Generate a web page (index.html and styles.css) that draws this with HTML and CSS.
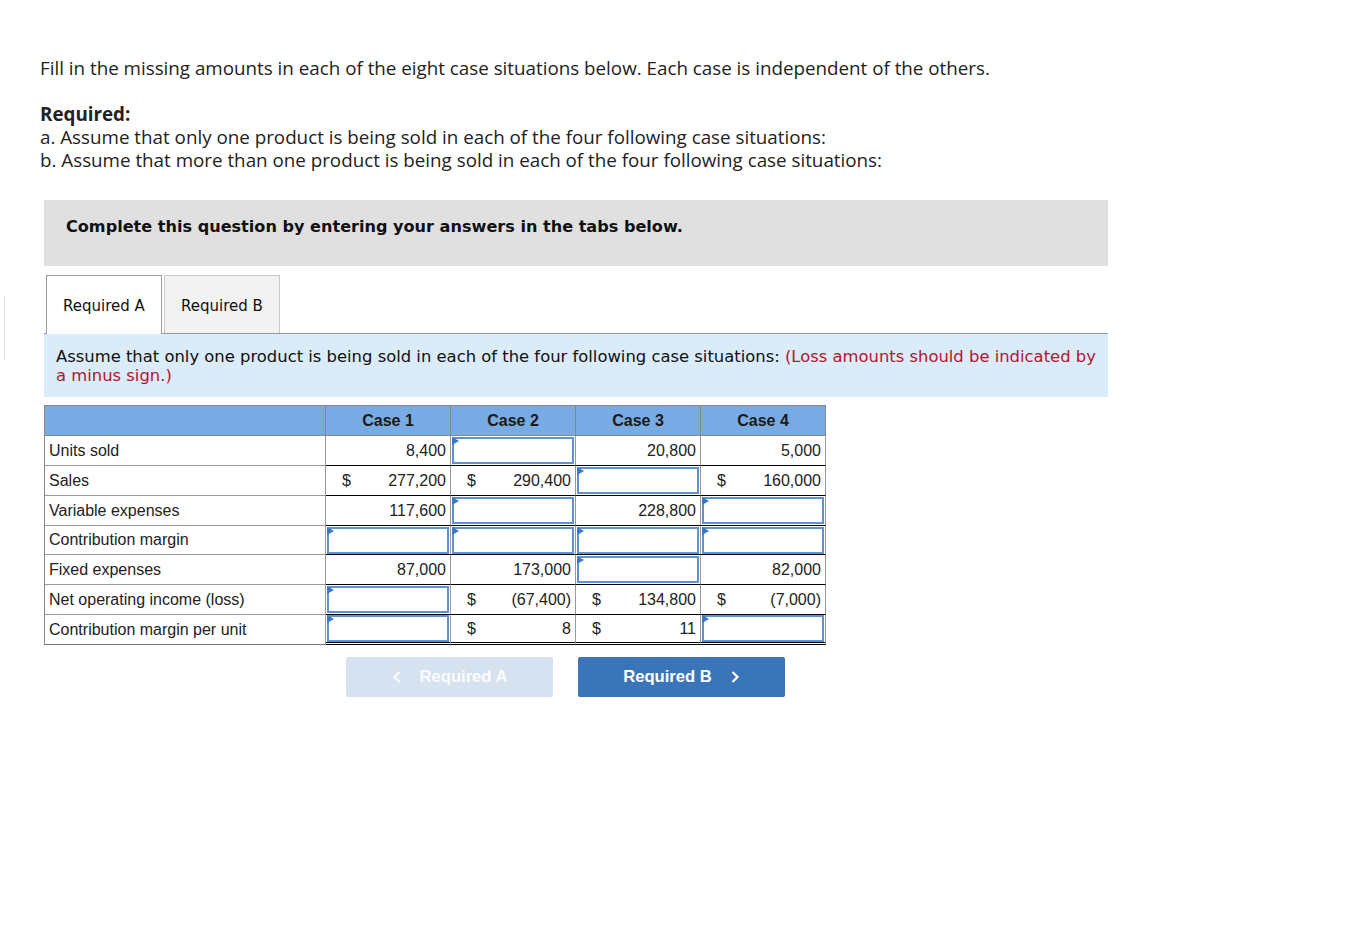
FILE: index.html
```html
<!DOCTYPE html>
<html>
<head>
<meta charset="utf-8">
<link rel="stylesheet" href="styles.css">
</head>
<body>
<div class="edge-mark"></div>
<div class="page">
  <p class="intro">Fill in the missing amounts in each of the eight case situations below. Each case is independent of the others.</p>
  <div class="required">
    <div class="req-title">Required:</div>
    <div>a. Assume that only one product is being sold in each of the four following case situations:</div>
    <div>b. Assume that more than one product is being sold in each of the four following case situations:</div>
  </div>
  <div class="work">
    <div class="banner">Complete this question by entering your answers in the tabs below.</div>
    <div class="tabs">
      <div class="tab active">Required A</div>
      <div class="tab">Required B</div>
    </div>
    <div class="info">Assume that only one product is being sold in each of the four following case situations: <span class="red">(Loss amounts should be indicated by a minus sign.)</span></div>
    <table class="grid">
      <thead>
        <tr>
          <th class="lbl"></th>
          <th>Case 1</th>
          <th>Case 2</th>
          <th>Case 3</th>
          <th>Case 4</th>
        </tr>
      </thead>
      <tbody>
        <tr>
          <td class="lbl">Units sold</td>
          <td class="val"><span class="num">8,400</span></td>
          <td class="val inp"><div class="box"></div></td>
          <td class="val"><span class="num">20,800</span></td>
          <td class="val"><span class="num">5,000</span></td>
        </tr>
        <tr>
          <td class="lbl">Sales</td>
          <td class="val"><span class="cur">$</span><span class="num">277,200</span></td>
          <td class="val"><span class="cur">$</span><span class="num">290,400</span></td>
          <td class="val inp"><div class="box"></div></td>
          <td class="val"><span class="cur">$</span><span class="num">160,000</span></td>
        </tr>
        <tr>
          <td class="lbl">Variable expenses</td>
          <td class="val"><span class="num">117,600</span></td>
          <td class="val inp"><div class="box"></div></td>
          <td class="val"><span class="num">228,800</span></td>
          <td class="val inp"><div class="box"></div></td>
        </tr>
        <tr class="short">
          <td class="lbl">Contribution margin</td>
          <td class="val inp"><div class="box"></div></td>
          <td class="val inp"><div class="box"></div></td>
          <td class="val inp"><div class="box"></div></td>
          <td class="val inp"><div class="box"></div></td>
        </tr>
        <tr>
          <td class="lbl">Fixed expenses</td>
          <td class="val"><span class="num">87,000</span></td>
          <td class="val"><span class="num">173,000</span></td>
          <td class="val inp"><div class="box"></div></td>
          <td class="val"><span class="num">82,000</span></td>
        </tr>
        <tr>
          <td class="lbl">Net operating income (loss)</td>
          <td class="val inp"><div class="box"></div></td>
          <td class="val"><span class="cur">$</span><span class="num">(67,400)</span></td>
          <td class="val"><span class="cur">$</span><span class="num">134,800</span></td>
          <td class="val"><span class="cur">$</span><span class="num">(7,000)</span></td>
        </tr>
        <tr class="last">
          <td class="lbl">Contribution margin per unit</td>
          <td class="val inp"><div class="box"></div></td>
          <td class="val"><span class="cur">$</span><span class="num">8</span></td>
          <td class="val"><span class="cur">$</span><span class="num">11</span></td>
          <td class="val inp"><div class="box"></div></td>
        </tr>
      </tbody>
    </table>
    <div class="nav">
      <button class="btn prev"><svg width="10" height="14" viewBox="0 0 10 14"><path d="M7.5 2 L2.5 7 L7.5 12" fill="none" stroke="currentColor" stroke-width="2.2"/></svg><span>Required A</span></button>
      <button class="btn next"><span>Required B</span><svg width="10" height="14" viewBox="0 0 10 14"><path d="M2.5 2 L7.5 7 L2.5 12" fill="none" stroke="currentColor" stroke-width="2.2"/></svg></button>
    </div>
  </div>
</div>
</body>
</html>
```

FILE: styles.css
```css
html, body {
  margin: 0;
  padding: 0;
  background: #fff;
}

body {
  font-family: "Open Sans", "Liberation Sans", sans-serif;
  color: #222;
}

.edge-mark {
  position: absolute;
  left: 4px;
  top: 296px;
  width: 1px;
  height: 64px;
  background: #e2e2e2;
}

.page {
  padding: 57px 0 0 40px;
}

.intro {
  margin: 0;
  font-size: 18.8px;
  line-height: 23px;
}

.required {
  margin-top: 23px;
  font-size: 18.8px;
  line-height: 23px;
}

.req-title {
  font-weight: 700;
}

.work {
  margin-left: 4px;
  width: 1064px;
  margin-top: 28px;
}

.banner {
  background: #e0e0e0;
  height: 66px;
  box-sizing: border-box;
  padding: 17px 0 0 22px;
  font-family: "DejaVu Sans", Verdana, sans-serif;
  font-weight: 700;
  font-size: 16.1px;
  line-height: 20px;
  color: #111;
}

.tabs {
  display: flex;
  gap: 2px;
  margin-top: 9px;
  padding-left: 2px;
  border-bottom: 1px solid #999;
  height: 58px;
}

.tab {
  width: 116px;
  box-sizing: border-box;
  border: 1px solid #c8c8c8;
  border-bottom: none;
  background: #f2f2f2;
  font-family: "DejaVu Sans", Verdana, sans-serif;
  font-size: 15px;
  color: #111;
  display: flex;
  align-items: center;
  justify-content: center;
  height: 58px;
  padding-top: 2px;
}

.tab.active {
  background: #fff;
  border-color: #999;
  height: 59px;
  margin-bottom: -1px;
}

.info {
  background: #daebf9;
  height: 63px;
  box-sizing: border-box;
  padding: 13px 12px 0 12px;
  font-family: "DejaVu Sans", Verdana, sans-serif;
  font-size: 16.4px;
  line-height: 19px;
  color: #111;
}

.red {
  color: #b3162f;
}

.grid {
  margin-top: 8px;
  border-collapse: separate;
  border-spacing: 0;
  border-left: 1px solid #888;
  border-top: 1px solid #888;
  font-family: "Liberation Sans", Arial, sans-serif;
  font-size: 16px;
  color: #222;
}

.grid th {
  box-sizing: border-box;
  background: #78abe3;
  height: 30px;
  font-weight: 700;
  border-right: 1px solid #888;
  border-bottom: 1px solid #888;
  padding: 0;
  width: 125px;
  color: #1a1a1a;
  line-height: 18px;
}

.grid th.lbl {
  width: 281px;
}

.grid td {
  box-sizing: border-box;
  height: 30px;
  padding: 0;
  border-right: 1px solid #999;
  line-height: 18px;
}

.grid td.lbl {
  border-bottom: 1px solid #999;
  padding-left: 4px;
  width: 281px;
}

.grid td.val {
  border-bottom: 1px solid #000;
  position: relative;
  text-align: right;
  padding-right: 4px;
  width: 125px;
}

.grid tr.short td {
  height: 29px;
}

.grid tr.last td.val {
  border-bottom: 3px double #000;
}

.grid tr.last td {
  height: 30px;
}

.grid tr.last td.lbl {
  border-bottom: 1px solid #777;
}

.cur {
  float: left;
  padding-left: 16px;
}

.grid td.inp {
  padding: 0 1px;
}

.box {
  position: relative;
  height: 23px;
  border: 2px solid #5e92d2;
  background: #fff;
}

.box::before {
  content: "";
  position: absolute;
  left: -2px;
  top: -2px;
  width: 0;
  height: 0;
  border-top: 4px solid transparent;
  border-bottom: 4px solid transparent;
  border-left: 7px solid #3b77c6;
}

.nav {
  display: flex;
  gap: 25px;
  margin-top: 12px;
  margin-left: 302px;
}

.btn {
  width: 207px;
  height: 40px;
  border: none;
  border-radius: 2px;
  font-family: "Liberation Sans", Arial, sans-serif;
  font-weight: 700;
  font-size: 16.6px;
  color: #fff;
  display: flex;
  align-items: center;
  justify-content: center;
  gap: 18px;
  padding: 0;
}

.btn.prev {
  background: #d6e2f0;
  color: #fbfcfe;
}

.btn.next {
  background: #3a75b9;
}
```
